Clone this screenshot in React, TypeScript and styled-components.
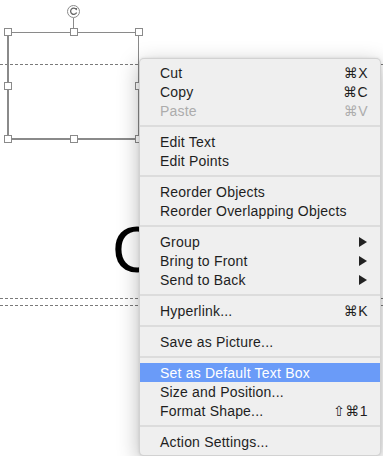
import styled, { createGlobalStyle } from 'styled-components';

const GlobalStyle = createGlobalStyle`
  html, body {
    margin: 0;
    padding: 0;
    background: #fff;
  }
  body {
    font-family: "Liberation Sans", Arial, sans-serif;
  }
`;

const Canvas = styled.div`
  position: relative;
  width: 383px;
  height: 456px;
  overflow: hidden;
  background: #fff;
`;

// slide guides
const DashedLine = styled.div<{ $top: number }>`
  position: absolute;
  left: 0;
  right: 0;
  top: ${(p) => p.$top}px;
  border-top: 1px dashed #7a7a7a;
`;

const BigGlyph = styled.div`
  position: absolute;
  left: 112px;
  top: 212px;
  font-size: 65px;
  line-height: 76px;
  color: #000;
`;

// selected text box
const Selection = styled.div`
  position: absolute;
  left: 4px;
  top: 5px;
  width: 139px;
  display: flex;
  flex-direction: column;
  align-items: center;
`;

const Stem = styled.div`
  width: 1px;
  height: 10px;
  background: #8a8a8a;
`;

const Frame = styled.div`
  position: relative;
  align-self: stretch;
  height: 115px;
  display: flex;
  padding: 4px 4px 3px 3px;
  box-sizing: border-box;
`;

const FrameBorder = styled.div`
  flex: 1;
  border-top: 1px solid #8a8a8a;
  border-right: 1px solid #8a8a8a;
  border-left: 2px solid #8a8a8a;
  border-bottom: 2px solid #8a8a8a;
`;

const HandleLayer = styled.div`
  position: absolute;
  inset: 0;
  display: flex;
  flex-direction: column;
  justify-content: space-between;
`;

const HandleRow = styled.div`
  display: flex;
  justify-content: space-between;
`;

const Handle = styled.div<{ $hidden?: boolean }>`
  width: 8px;
  height: 8px;
  box-sizing: border-box;
  background: #fff;
  border: 1px solid #8a8a8a;
  visibility: ${(p) => (p.$hidden ? 'hidden' : 'visible')};
`;

// context menu
const Menu = styled.div`
  position: absolute;
  left: 139px;
  top: 58px;
  width: 242px;
  padding: 4px 0;
  box-sizing: border-box;
  background: #efefef;
  border: 1px solid rgba(0, 0, 0, 0.12);
  border-radius: 5px;
  box-shadow: 0 6px 22px rgba(0, 0, 0, 0.28), 0 0 3px rgba(0, 0, 0, 0.1);
`;

const Item = styled.div<{ $active?: boolean; $disabled?: boolean }>`
  display: flex;
  align-items: center;
  justify-content: space-between;
  height: 19px;
  padding: 0 12px 0 20px;
  font-size: 14px;
  letter-spacing: 0.2px;
  color: ${(p) => (p.$active ? '#fff' : p.$disabled ? '#acacac' : '#1e1e1e')};
  background: ${(p) => (p.$active ? '#6a9bf8' : 'transparent')};
`;

const Shortcut = styled.span`
  font-family: "Liberation Sans", "DejaVu Sans", sans-serif;
  letter-spacing: 0.5px;
`;

const Separator = styled.div`
  height: 2px;
  margin: 5px 0;
  background: #dcdcdc;
`;

const Arrow = () => (
  <svg width="8" height="10" viewBox="0 0 8 10" style={{ marginRight: 1 }}>
    <polygon points="0,0 8,5 0,10" fill="#222" />
  </svg>
);

const RotateIcon = () => (
  <svg width="13" height="13" viewBox="0 0 13 13">
    <circle cx="6.5" cy="6.5" r="6" fill="#fff" stroke="#8a8a8a" strokeWidth="1" />
    <path d="M9.2 4.4 A3.1 3.1 0 1 0 9.6 7.4" fill="none" stroke="#666" strokeWidth="1.3" />
    <polygon points="7.6,3.3 10.2,2.9 9.9,5.6" fill="#666" />
  </svg>
);

type Entry =
  | { label: string; shortcut?: string; submenu?: boolean; disabled?: boolean; active?: boolean }
  | 'sep';

const entries: Entry[] = [
  { label: 'Cut', shortcut: '⌘X' },
  { label: 'Copy', shortcut: '⌘C' },
  { label: 'Paste', shortcut: '⌘V', disabled: true },
  'sep',
  { label: 'Edit Text' },
  { label: 'Edit Points' },
  'sep',
  { label: 'Reorder Objects' },
  { label: 'Reorder Overlapping Objects' },
  'sep',
  { label: 'Group', submenu: true },
  { label: 'Bring to Front', submenu: true },
  { label: 'Send to Back', submenu: true },
  'sep',
  { label: 'Hyperlink...', shortcut: '⌘K' },
  'sep',
  { label: 'Save as Picture...' },
  'sep',
  { label: 'Set as Default Text Box', active: true },
  { label: 'Size and Position...' },
  { label: 'Format Shape...', shortcut: '⇧⌘1' },
  'sep',
  { label: 'Action Settings...' },
];

export default function App() {
  return (
    <>
      <GlobalStyle />
      <Canvas>
        <DashedLine $top={64} />
        <DashedLine $top={298} />
        <DashedLine $top={305} />
        <BigGlyph>C</BigGlyph>

        <Selection>
          <RotateIcon />
          <Stem />
          <Frame>
            <FrameBorder />
            <HandleLayer>
              <HandleRow>
                <Handle />
                <Handle />
                <Handle />
              </HandleRow>
              <HandleRow>
                <Handle />
                <Handle $hidden />
                <Handle />
              </HandleRow>
              <HandleRow>
                <Handle />
                <Handle />
                <Handle />
              </HandleRow>
            </HandleLayer>
          </Frame>
        </Selection>

        <Menu>
          {entries.map((e, i) =>
            e === 'sep' ? (
              <Separator key={i} />
            ) : (
              <Item key={i} $active={e.active} $disabled={e.disabled}>
                <span>{e.label}</span>
                {e.shortcut ? <Shortcut>{e.shortcut}</Shortcut> : null}
                {e.submenu ? <Arrow /> : null}
              </Item>
            ),
          )}
        </Menu>
      </Canvas>
    </>
  );
}
